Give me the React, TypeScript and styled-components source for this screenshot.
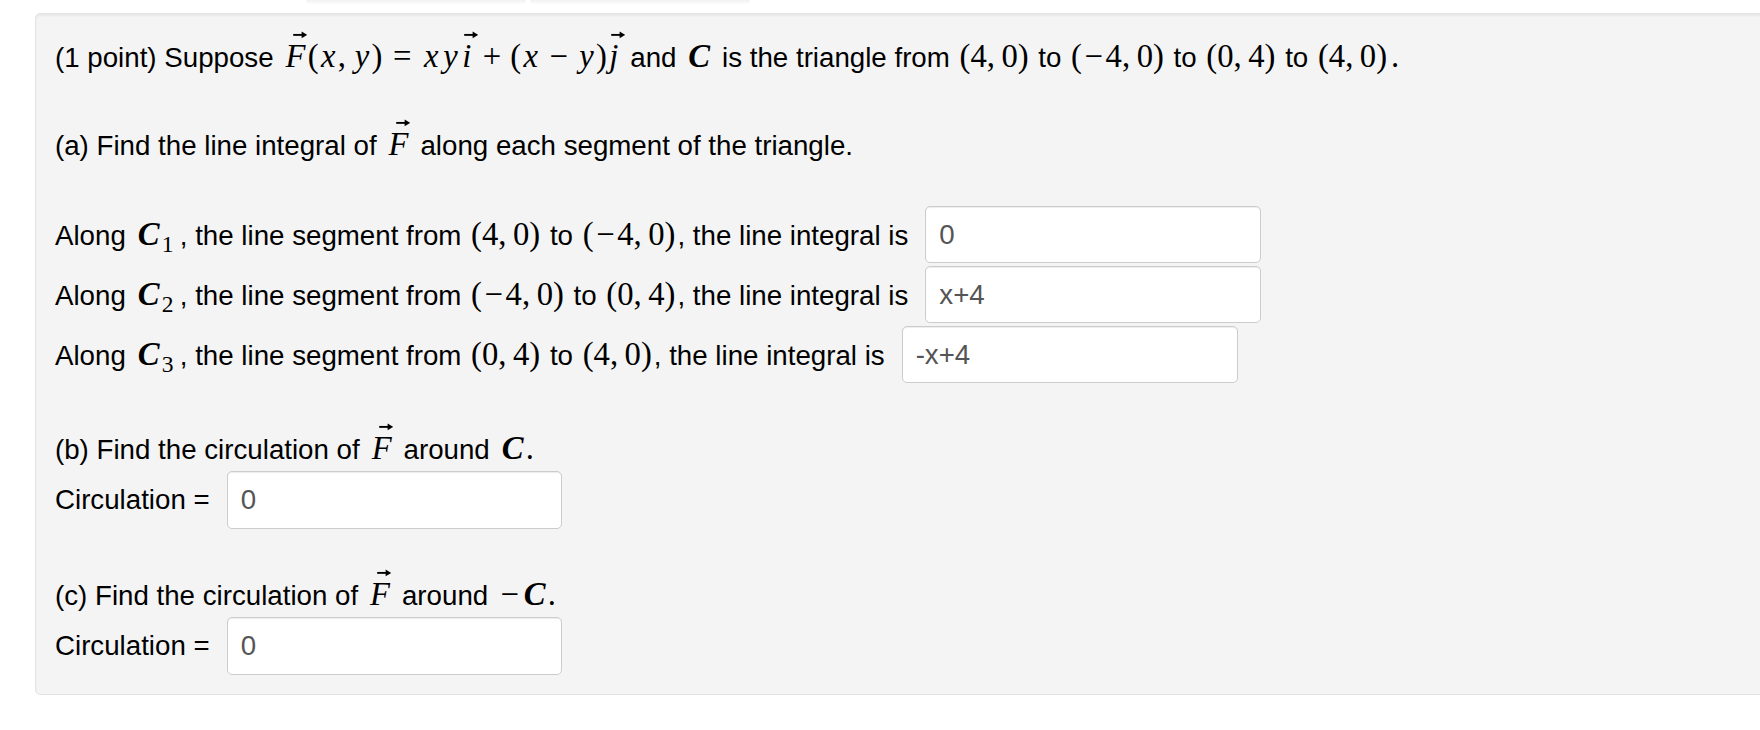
import * as React from 'react';
import styled, { createGlobalStyle } from 'styled-components';

const GlobalStyle = createGlobalStyle`
    html, body {
        margin: 0;
        padding: 0;
        background: #ffffff;
        overflow: hidden;
    }
    body {
        font-family: 'Liberation Sans', Arial, Helvetica, sans-serif;
        color: #000;
    }
`;

const Page = styled.div`
    width: 1800px;
    padding-left: 35px;
    box-sizing: border-box;
`;

const TopStrip = styled.div`
    display: flex;
    gap: 4px;
    height: 13px;
    padding-left: 271px;
`;

const Ghost = styled.div`
    width: 220px;
    height: 4px;
    border-radius: 0 0 5px 5px;
    background: linear-gradient(#f1f1f1, #fcfcfc);
`;

const Well = styled.div`
    box-sizing: border-box;
    background: #f4f4f4;
    border: 1px solid #e3e3e3;
    border-radius: 5px;
    box-shadow: inset 0 2px 2px rgba(0, 0, 0, 0.05);
    padding: 18px 19px 19px;
    font-size: 27.7px;
`;

const Line = styled.div<{ $lh: number; $mt: number }>`
    line-height: ${props => props.$lh}px;
    margin-top: ${props => props.$mt}px;
    white-space: nowrap;
`;

const Rows = styled.div`
    display: flex;
    flex-direction: column;
    gap: 3px;
    margin-top: 34px;
`;

const Row = styled.div<{ $mt?: number }>`
    display: flex;
    align-items: center;
    white-space: nowrap;
    margin-top: ${props => props.$mt ?? 0}px;
`;

const Answer = styled.input<{ $w: number; $h: number }>`
    box-sizing: border-box;
    width: ${props => props.$w}px;
    height: ${props => props.$h}px;
    margin-left: 17px;
    padding: 0 13px;
    background: #fff;
    border: 1px solid #cccccc;
    border-radius: 5px;
    box-shadow: inset 0 1px 1px rgba(0, 0, 0, 0.075);
    font-family: 'Liberation Sans', Arial, Helvetica, sans-serif;
    font-size: 27.7px;
    color: #555;
    outline: none;
`;

const M = styled.span`
    font-family: 'Liberation Serif', 'Times New Roman', serif;
    font-size: 1.18em;
    line-height: 1;
    margin: 0 0.06em;
`;

const I = styled.span<{ $bold?: boolean }>`
    font-style: italic;
    font-weight: ${props => (props.$bold ? 700 : 400)};
    padding: 0 0.07em;
`;

const Op = styled.span<{ $space: number }>`
    margin: 0 ${props => props.$space}em;
`;

const Neg = styled.span`
    padding: 0 0.08em;
`;

const Sub = styled.span`
    font-style: normal;
    font-weight: 400;
    font-size: 0.72em;
    vertical-align: -0.3em;
    line-height: 0;
    margin-right: 0.18em;
`;

const VecWrap = styled.span`
    position: relative;
    display: inline-block;
    font-style: italic;
    padding: 0 0.07em;
`;

const VecArrow = styled.svg`
    position: absolute;
    left: 50%;
    top: -0.32em;
    width: 0.48em;
    height: 0.3em;
    transform: translateX(-25%);
`;

function Vec({ children }: { children: React.ReactNode }): React.ReactElement {
    return (
        <VecWrap>
            <VecArrow viewBox="0 0 14 8">
                <line x1="1" y1="4" x2="10" y2="4" stroke="#000" strokeWidth="1.7" />
                <polygon points="8.5,1 13.5,4 8.5,7" fill="#000" />
            </VecArrow>
            {children}
        </VecWrap>
    );
}

const Num = ({ v }: { v: string }) =>
    v.startsWith('-') ? (
        <>
            <Neg>&minus;</Neg>
            {v.slice(1)}
        </>
    ) : (
        <>{v}</>
    );

const Pt = ({ a, b }: { a: string; b: string }) => (
    <M>
        (<Num v={a} />,&thinsp;<Num v={b} />)
    </M>
);

const segments = [
    { n: '1', from: ['4', '0'], to: ['-4', '0'], value: '0' },
    { n: '2', from: ['-4', '0'], to: ['0', '4'], value: 'x+4' },
    { n: '3', from: ['0', '4'], to: ['4', '0'], value: '-x+4' },
];

function App(): React.ReactElement {
    return (
        <Page>
            <GlobalStyle />
            <TopStrip>
                <Ghost />
                <Ghost />
            </TopStrip>
            <Well>
                <Line $lh={52} $mt={0}>
                    (1 point) Suppose{' '}
                    <M>
                        <Vec>F</Vec>(<I>x</I>,&thinsp;<I>y</I>)<Op $space={0.32}>=</Op><I>x</I><I>y</I><Vec>i</Vec>
                        <Op $space={0.28}>+</Op>(<I>x</I><Op $space={0.28}>&minus;</Op><I>y</I>)<Vec>j</Vec>
                    </M>{' '}
                    and <M><I $bold>C</I></M> is the triangle from <Pt a="4" b="0" /> to <Pt a="-4" b="0" /> to{' '}
                    <Pt a="0" b="4" /> to <Pt a="4" b="0" /><M>.</M>
                </Line>
                <Line $lh={52} $mt={36}>
                    (a) Find the line integral of <M><Vec>F</Vec></M> along each segment of the triangle.
                </Line>
                <Rows>
                    {segments.map(s => (
                        <Row key={s.n}>
                            <span>
                                Along <M><I $bold>C</I><Sub>{s.n}</Sub></M>, the line segment from{' '}
                                <Pt a={s.from[0]} b={s.from[1]} /> to <Pt a={s.to[0]} b={s.to[1]} />, the line integral is
                            </span>
                            <Answer $w={336} $h={57} defaultValue={s.value} />
                        </Row>
                    ))}
                </Rows>
                <Line $lh={40} $mt={47}>
                    (b) Find the circulation of <M><Vec>F</Vec></M> around <M><I $bold>C</I>.</M>
                </Line>
                <Row $mt={1}>
                    <span>Circulation =</span>
                    <Answer $w={335} $h={58} defaultValue="0" />
                </Row>
                <Line $lh={40} $mt={47}>
                    (c) Find the circulation of <M><Vec>F</Vec></M> around <M><Neg>&minus;</Neg><I $bold>C</I>.</M>
                </Line>
                <Row $mt={1}>
                    <span>Circulation =</span>
                    <Answer $w={335} $h={58} defaultValue="0" />
                </Row>
            </Well>
        </Page>
    );
}

export default App;
